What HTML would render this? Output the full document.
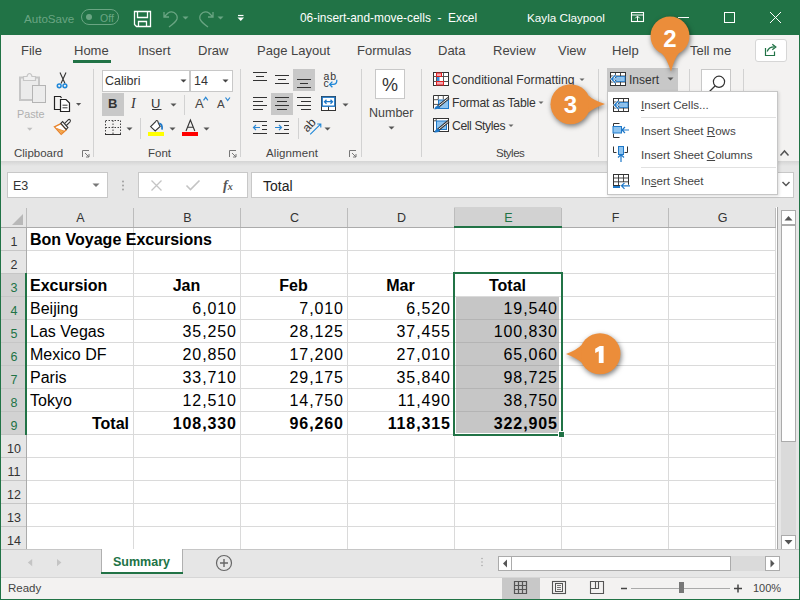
<!DOCTYPE html><html><head><meta charset="utf-8"><style>
*{margin:0;padding:0;box-sizing:border-box}
html,body{width:800px;height:600px;overflow:hidden;background:#e6e6e6;font-family:"Liberation Sans",sans-serif}
.a{position:absolute}
svg{position:absolute;overflow:visible}
.t{position:absolute;white-space:nowrap;line-height:1}
.tab{position:absolute;top:44px;font-size:13px;color:#444;white-space:nowrap;line-height:1}
.gl{position:absolute;top:148px;font-size:11.5px;color:#444;white-space:nowrap;line-height:1}
.rt{position:absolute;font-size:12px;color:#333;white-space:nowrap;line-height:1}
.mi{position:absolute;left:641px;font-size:11.6px;color:#444;white-space:nowrap;line-height:1}
.c{position:absolute;font-size:16px;color:#000;white-space:nowrap;line-height:1}
.n{letter-spacing:0.9px}
.b{font-weight:bold}
.rh{position:absolute;left:1px;width:26px;font-size:12.5px;color:#444;text-align:center;line-height:1}
</style></head><body>
<div class="a" style="left:0;top:0;width:800px;height:35px;background:#217346"></div>
<div class="t" style="left:24px;top:12.5px;font-size:11.6px;color:#6aa583">AutoSave</div>
<div class="a" style="left:81px;top:9px;width:38px;height:16px;border:1px solid #6aa583;border-radius:8px"></div>
<div class="a" style="left:85.5px;top:14px;width:6px;height:6px;border-radius:3px;background:#6aa583"></div>
<div class="t" style="left:100px;top:12.5px;font-size:10.5px;color:#6aa583">Off</div>
<svg style="left:0;top:0" width="800" height="35">
<path d="M134.5 11.5 H150.5 V26.5 H136.5 L134.5 24.5 Z" fill="none" stroke="#fff" stroke-width="1.3"/>
<path d="M137.5 11.5 V17.5 H147.5 V11.5" fill="none" stroke="#fff" stroke-width="1.3"/>
<path d="M138.5 26.5 V21.5 H146.5 V26.5" fill="none" stroke="#fff" stroke-width="1.3"/>
<path d="M164 12 V17 H169 M164 17 L168 13 Q171 11 174 12.5 Q178 15 177 19 Q176 22 169 27" fill="none" stroke="#6aa583" stroke-width="1.3"/>
<path d="M182.5 16.5 H188.5 L185.5 19.5 Z" fill="#6aa583"/>
<path d="M213 12 V17 H208 M213 17 L209 13 Q206 11 203 12.5 Q199 15 200 19 Q201 22 208 27" fill="none" stroke="#6aa583" stroke-width="1.3"/>
<path d="M217.5 16.5 H223.5 L220.5 19.5 Z" fill="#6aa583"/>
<path d="M238 15.5 H243.5" stroke="#fff" stroke-width="1.2"/>
<path d="M237.5 17.5 H244 L240.75 21 Z" fill="#fff"/>
<rect x="631.5" y="12.5" width="12" height="9" fill="none" stroke="#fff" stroke-width="1.1"/>
<path d="M631.5 15 H643.5 M637.5 21.5 V16.3 M635.3 18.3 L637.5 16.1 L639.7 18.3" fill="none" stroke="#fff" stroke-width="1"/>
<path d="M678 17.5 H689" stroke="#fff" stroke-width="1"/>
<rect x="724.5" y="12.5" width="10" height="10" fill="none" stroke="#fff" stroke-width="1"/>
<path d="M770 12 L781 23 M781 12 L770 23" stroke="#fff" stroke-width="1"/>
</svg>
<div class="t" style="left:300px;top:13px;font-size:11.9px;color:#fff">06-insert-and-move-cells&nbsp; -&nbsp; Excel</div>
<div class="t" style="left:527px;top:12px;font-size:11.7px;color:#fff">Kayla Claypool</div>
<div class="a" style="left:0;top:35px;width:800px;height:126px;background:#f3f2f1"></div>
<div class="tab" style="left:21px">File</div>
<div class="tab" style="left:74px">Home</div>
<div class="tab" style="left:138px">Insert</div>
<div class="tab" style="left:198px">Draw</div>
<div class="tab" style="left:257px">Page Layout</div>
<div class="tab" style="left:357px">Formulas</div>
<div class="tab" style="left:438px">Data</div>
<div class="tab" style="left:493px">Review</div>
<div class="tab" style="left:558px">View</div>
<div class="tab" style="left:612px">Help</div>
<div class="tab" style="left:690px">Tell me</div>
<div class="a" style="left:73px;top:60px;width:38px;height:3px;background:#217346"></div>
<div class="a" style="left:755px;top:38.5px;width:31.5px;height:23px;background:#fff;border:1px solid #d6d6d6;border-radius:3px"></div>
<svg style="left:0;top:0" width="800" height="600">
<path d="M765.5 48 V55.5 H774.5 V51.5" fill="none" stroke="#217346" stroke-width="1.2"/>
<path d="M767.2 51.5 Q768.5 46.8 774.5 46.8" fill="none" stroke="#217346" stroke-width="1.3"/>
<path d="M772.3 44.2 L775.8 47 L772.3 49.8" fill="none" stroke="#217346" stroke-width="1.3"/>
</svg>
<div class="a" style="left:93px;top:69px;width:1px;height:88px;background:#d2d2d2"></div>
<div class="a" style="left:240px;top:69px;width:1px;height:88px;background:#d2d2d2"></div>
<div class="a" style="left:361px;top:69px;width:1px;height:88px;background:#d2d2d2"></div>
<div class="a" style="left:421px;top:69px;width:1px;height:88px;background:#d2d2d2"></div>
<div class="a" style="left:598px;top:69px;width:1px;height:88px;background:#d2d2d2"></div>
<div class="a" style="left:689px;top:69px;width:1px;height:88px;background:#d2d2d2"></div>
<div class="a" style="left:743px;top:69px;width:1px;height:88px;background:#d2d2d2"></div>
<div class="gl" style="left:14px;letter-spacing:0px">Clipboard</div>
<div class="gl" style="left:148px;letter-spacing:0px">Font</div>
<div class="gl" style="left:266px;letter-spacing:0.1px">Alignment</div>
<div class="gl" style="left:496px;letter-spacing:-0.5px">Styles</div>
<svg style="left:0;top:0" width="800" height="600">
<path d="M82.5 157 V150.5 H89" fill="none" stroke="#777" stroke-width="1"/><path d="M85 153 L89 157 M89 154 V157 H86" fill="none" stroke="#777" stroke-width="1"/>
<path d="M229.5 157 V150.5 H236" fill="none" stroke="#777" stroke-width="1"/><path d="M232 153 L236 157 M236 154 V157 H233" fill="none" stroke="#777" stroke-width="1"/>
<path d="M349.5 157 V150.5 H356" fill="none" stroke="#777" stroke-width="1"/><path d="M352 153 L356 157 M356 154 V157 H353" fill="none" stroke="#777" stroke-width="1"/>
</svg>
<svg style="left:0;top:0" width="800" height="600">
<rect x="20" y="77.5" width="19" height="22.5" fill="#ebebeb" stroke="#c6c6c6" stroke-width="2"/>
<path d="M23.5 80.5 V76.5 H27 Q27.5 73.5 29.5 73.5 Q31.5 73.5 32 76.5 H35.5 V80.5 Z" fill="#f0f0f0" stroke="#c6c6c6" stroke-width="1.2"/>
<rect x="32.5" y="85.5" width="13" height="17" fill="#ececec" stroke="#b4b4b4" stroke-width="1"/>
<path d="M27 127.8 H32.5 L29.75 130.8 Z" fill="#c0c0c0"/>
<path d="M60 72.5 L65 83.5 M66 72.5 L61 83.5" stroke="#333" stroke-width="1.1"/>
<circle cx="59.2" cy="85.8" r="1.9" fill="none" stroke="#1e87d8" stroke-width="1.5"/>
<circle cx="64.9" cy="85.8" r="1.9" fill="none" stroke="#1e87d8" stroke-width="1.5"/>
<path d="M60 109.5 H54.5 V96.5 H60.5 L61.5 98" fill="none" stroke="#222" stroke-width="1.2"/>
<path d="M60.5 99.5 H66 L69.5 103 V111.5 H60.5 Z" fill="#fff" stroke="#222" stroke-width="1.2"/>
<path d="M62.5 105.2 H67.5 M62.5 107.8 H67.5" stroke="#222" stroke-width="0.9"/>
<path d="M76 103.1 H81.2 L78.6 105.8 Z" fill="#555"/>
<path d="M54.4 126.8 L61 123.6 L66.4 129.8 L61.2 134.4 Z" fill="#fff" stroke="#e8832a" stroke-width="1.3"/>
<path d="M57 128.6 L64.6 131.2 L61.4 133 Z" fill="#f6b04a" stroke="#e8832a" stroke-width="0.8"/>
<path d="M64 124.2 L68.2 119.8 Q69.3 119 70.1 119.9 Q70.8 120.8 70 121.8 L65.8 126" fill="#fff" stroke="#333" stroke-width="1.1"/>
<path d="M60.8 123.4 L62.6 121.6 L67.9 127.6 L66.2 129.4 Z" fill="#fff" stroke="#333" stroke-width="1.1"/>
</svg>
<div class="t" style="left:17px;top:109px;font-size:10.8px;color:#b0b0b0;letter-spacing:0px">Paste</div>
<div class="a" style="left:102px;top:69.5px;width:88px;height:22px;background:#fff;border:1px solid #c8c8c8"></div>
<div class="a" style="left:190px;top:69.5px;width:43px;height:22px;background:#fff;border:1px solid #c8c8c8"></div>
<div class="t" style="left:105px;top:75px;font-size:12.5px;color:#333">Calibri</div>
<div class="t" style="left:194px;top:75px;font-size:12.5px;color:#333">14</div>
<div class="a" style="left:102px;top:93px;width:22px;height:23px;background:#c8c8c8"></div>
<div class="a" style="left:293px;top:69px;width:22px;height:22px;background:#c8c8c8"></div>
<div class="a" style="left:271px;top:93px;width:22px;height:22px;background:#c8c8c8"></div>
<div class="t" style="left:108px;top:97px;font-size:13px;font-weight:bold;color:#333">B</div>
<div class="t" style="left:131px;top:97px;font-size:14px;font-style:italic;font-family:'Liberation Serif',serif;color:#333">I</div>
<div class="t" style="left:151px;top:97px;font-size:13px;color:#333">U</div>
<div class="t" style="left:195px;top:97px;font-size:13px;color:#444">A</div>
<div class="t" style="left:217px;top:99px;font-size:11.5px;color:#444">A</div>
<svg style="left:0;top:0" width="800" height="600">
<path d="M180.5 79.5 H186.5 L183.5 82.5 Z" fill="#444"/>
<path d="M222.5 79.5 H228.5 L225.5 82.5 Z" fill="#444"/>
<path d="M152 109.5 H161.5" stroke="#333" stroke-width="1"/>
<path d="M170.5 103.5 H176.5 L173.5 106.5 Z" fill="#555"/>
<rect x="184" y="95" width="1" height="20" fill="#d2d2d2"/>
<path d="M203.5 100.3 L205.7 97.3 L207.9 100.3" fill="none" stroke="#2b87d3" stroke-width="1.2"/>
<path d="M225.5 97.5 L227.7 100.5 L229.9 97.5" fill="none" stroke="#2b87d3" stroke-width="1.2"/>
<path d="M105.5 120.5 H120.5 V134.5 M105.5 134.5 V120.5 M113 120.5 V134.5 M105.5 127.5 H120.5" fill="none" stroke="#444" stroke-width="1" stroke-dasharray="1.5 1.5"/>
<path d="M105 134.5 H121" stroke="#333" stroke-width="1"/>
<path d="M126.5 127.5 H132.5 L129.5 130.5 Z" fill="#555"/>
<rect x="140" y="118" width="1" height="21" fill="#d2d2d2"/>
<path d="M150.6 126.6 L155.6 121.6 Q156.6 119.6 157.8 121.2 L158.4 123.2 L160.2 126.4 L155.2 131 Z" fill="#fff" stroke="#333" stroke-width="1.1"/>
<path d="M159.2 123.4 Q162.6 123.8 162 129.6" fill="none" stroke="#1e78c8" stroke-width="1.7"/>
<rect x="148" y="132" width="16" height="4" fill="#ffff00"/>
<path d="M169.5 127.5 H175.5 L172.5 130.5 Z" fill="#555"/>
<rect x="182" y="132" width="16" height="4" fill="#ff0000"/><path d="M186 131 L190.4 120 L194.8 131 M187.5 127.2 H193.3" fill="none" stroke="#333" stroke-width="1.1"/>
<path d="M203.5 127.5 H209.5 L206.5 130.5 Z" fill="#555"/>
</svg>
<svg style="left:0;top:0" width="800" height="600">
<path d="M253 72.5 H267" stroke="#333" stroke-width="1"/><path d="M253 80.5 H267" stroke="#333" stroke-width="1"/><path d="M256 76.5 H264" stroke="#333" stroke-width="1"/>
<path d="M275 75.5 H289" stroke="#333" stroke-width="1"/><path d="M275 83.5 H289" stroke="#333" stroke-width="1"/><path d="M278 79.5 H286" stroke="#333" stroke-width="1"/>
<path d="M297 79.5 H311" stroke="#333" stroke-width="1"/><path d="M297 87.5 H311" stroke="#333" stroke-width="1"/><path d="M300 83.5 H308" stroke="#333" stroke-width="1"/>
<path d="M253 97.5 H267" stroke="#333" stroke-width="1"/><path d="M253 105.5 H267" stroke="#333" stroke-width="1"/><path d="M253 101.5 H263" stroke="#333" stroke-width="1"/><path d="M253 109.5 H263" stroke="#333" stroke-width="1"/>
<path d="M275 97.5 H289" stroke="#333" stroke-width="1"/><path d="M275 105.5 H289" stroke="#333" stroke-width="1"/><path d="M277 101.5 H287" stroke="#333" stroke-width="1"/><path d="M277 109.5 H287" stroke="#333" stroke-width="1"/>
<path d="M297 97.5 H311" stroke="#333" stroke-width="1"/><path d="M297 105.5 H311" stroke="#333" stroke-width="1"/><path d="M301 101.5 H311" stroke="#333" stroke-width="1"/><path d="M301 109.5 H311" stroke="#333" stroke-width="1"/>
<path d="M262 125.5 H267" stroke="#333" stroke-width="1"/><path d="M262 129.5 H267" stroke="#333" stroke-width="1"/><path d="M253 121.5 H267" stroke="#333" stroke-width="1"/><path d="M253 133.5 H267" stroke="#333" stroke-width="1"/>
<path d="M284 125.5 H289" stroke="#333" stroke-width="1"/><path d="M284 129.5 H289" stroke="#333" stroke-width="1"/><path d="M275 121.5 H289" stroke="#333" stroke-width="1"/><path d="M275 133.5 H289" stroke="#333" stroke-width="1"/>
<path d="M260 127.5 H253.5 M256 125 L253.5 127.5 L256 130" fill="none" stroke="#2b87d3" stroke-width="1.2"/>
<path d="M275 127.5 H281.5 M279 125 L281.5 127.5 L279 130" fill="none" stroke="#2b87d3" stroke-width="1.2"/>
<rect x="298" y="118" width="1" height="21" fill="#d2d2d2"/>
<rect x="321.5" y="96.5" width="14" height="14" fill="#fff" stroke="#333" stroke-width="1"/><path d="M328.5 106 V110.5" stroke="#333" stroke-width="1"/><rect x="322.2" y="97.2" width="12.6" height="9" fill="#fff" stroke="#1e78c8" stroke-width="1.4"/><path d="M324.5 101.7 H332.5 M326.5 99.7 L324.5 101.7 L326.5 103.7 M330.5 99.7 L332.5 101.7 L330.5 103.7" fill="none" stroke="#1e78c8" stroke-width="1.3"/>
<path d="M342.5 103.5 H348.5 L345.5 106.5 Z" fill="#555"/>
<path d="M310.2 134.4 L320.6 124.2 M317.2 124 H320.8 V127.6" fill="none" stroke="#1e87d8" stroke-width="1.1"/>
<path d="M324.5 127.5 H330.5 L327.5 130.5 Z" fill="#555"/>
<path d="M336.8 79.8 Q337.2 84.4 333 84.4 H329.6 M332.4 81.6 L329.6 84.4 L332.4 87.2" fill="none" stroke="#1e87d8" stroke-width="1.3"/>
</svg>
<div class="t" style="left:323.5px;top:70.7px;font-size:10.5px;color:#333;letter-spacing:0.8px">ab</div>
<div class="t" style="left:323.5px;top:78.2px;font-size:10.5px;color:#333">c</div>
<div class="t" style="left:309px;top:121.5px;font-size:12px;color:#333;transform:rotate(-48deg);transform-origin:0 100%">ab</div>
<div class="a" style="left:375px;top:69px;width:30px;height:30px;background:#fff;border:1px solid #c8c8c8"></div>
<div class="t" style="left:382px;top:76px;font-size:18px;color:#333">%</div>
<div class="t" style="left:369px;top:106.5px;font-size:12.5px;color:#444">Number</div>
<svg style="left:0;top:0" width="800" height="600"><path d="M388.5 126.5 H394.5 L391.5 129.5 Z" fill="#555"/></svg>
<div class="rt" style="left:452px;top:74px;font-size:12.2px">Conditional Formatting</div>
<div class="rt" style="left:452px;top:97px;font-size:12.2px;letter-spacing:-0.25px">Format as Table</div>
<div class="rt" style="left:452px;top:120px;font-size:12.2px;letter-spacing:-0.4px">Cell Styles</div>
<svg style="left:0;top:0" width="800" height="600">
<path d="M579.5 78.5 H584.5 L582 81 Z" fill="#666"/>
<path d="M538.5 101.5 H543.5 L541 104 Z" fill="#666"/>
<path d="M508.5 124.5 H513.5 L511 127 Z" fill="#666"/>
<rect x="433.5" y="72.5" width="15" height="13" fill="#fff" stroke="#333" stroke-width="1"/><path d="M433.5 76.5 H448.5 M433.5 81.5 H448.5 M436.5 72.5 V85.5 M443.5 72.5 V85.5" stroke="#444" stroke-width="0.9"/><rect x="436.5" y="73" width="5" height="3.5" fill="#f4a6b0" stroke="#e02020" stroke-width="1"/><rect x="436.5" y="81.5" width="7" height="3.5" fill="#f4a6b0" stroke="#e02020" stroke-width="1"/><rect x="437" y="77" width="2.5" height="4" fill="#3a8ee0"/>
<path d="M433.5 108.5 V95.5 H448.5 V99.5" fill="#fff" stroke="#333" stroke-width="1"/><path d="M433.5 99.7 H438 M433.5 104.4 H438 M438.3 95.5 V99.5 M443.3 95.5 V99.5" stroke="#444" stroke-width="0.9"/><rect x="438.5" y="100" width="10" height="8.5" fill="#8ec4f0" stroke="#1e78c8" stroke-width="1"/><path d="M438 106.6 L448.6 98" stroke="#333" stroke-width="2.8"/><path d="M438.4 106.2 L448.2 98.4" stroke="#fff" stroke-width="0.9"/><path d="M434.2 109.2 Q435.2 106 438.6 105.6 L440.2 107.2 Q439 109.6 434.2 109.2 Z" fill="#1e78c8"/>
<rect x="433.5" y="118.5" width="15" height="13" fill="#fff" stroke="#333" stroke-width="1"/><path d="M433.5 120.8 H436 M436.2 118.5 V121" stroke="#444" stroke-width="0.9"/><rect x="436.5" y="121" width="10" height="8.5" fill="#8ec4f0" stroke="#1e78c8" stroke-width="1"/><path d="M438 129.8 L448.6 121.2" stroke="#333" stroke-width="2.8"/><path d="M438.4 129.4 L448.2 121.6" stroke="#fff" stroke-width="0.9"/><path d="M434.2 132.4 Q435.2 129.2 438.6 128.8 L440.2 130.4 Q439 132.8 434.2 132.4 Z" fill="#1e78c8"/>
</svg>
<div class="a" style="left:607px;top:68px;width:71px;height:23px;background:#c8c8c8"></div>
<div class="rt" style="left:629px;top:74px;font-size:12px">Insert</div>
<svg style="left:0;top:0" width="800" height="600">
<rect x="610.5" y="72.5" width="15" height="13" fill="#fff" stroke="#333" stroke-width="1"/>
<path d="M610.5 76 H625.5 M610.5 82 H625.5 M615.5 72.5 V85.5 M620.5 72.5 V85.5" stroke="#333" stroke-width="0.9"/>
<rect x="616" y="76.5" width="9" height="5" fill="#8ec4f0" stroke="#1e78c8" stroke-width="0.8"/>
<path d="M621 79 H611.5 M615.5 75 L611.5 79 L615.5 83" fill="none" stroke="#fff" stroke-width="2.2"/>
<path d="M621 79 H611.5 M615.5 75 L611.5 79 L615.5 83" fill="none" stroke="#1e78c8" stroke-width="1.2"/>
<path d="M667.5 77.5 H673.5 L670.5 80.5 Z" fill="#555"/>
</svg>
<div class="a" style="left:701px;top:69px;width:30px;height:30px;background:#fff;border:1px solid #c8c8c8"></div>
<svg style="left:0;top:0" width="800" height="600"><circle cx="719" cy="81.8" r="5.6" fill="none" stroke="#333" stroke-width="1.2"/><path d="M715 86 L709.5 91.5" stroke="#333" stroke-width="1.3"/></svg>
<svg style="left:0;top:0" width="800" height="600"><path d="M780.5 155.5 L784.5 151 L788.5 155.5" fill="none" stroke="#555" stroke-width="1.5"/></svg>
<div class="a" style="left:0;top:161px;width:800px;height:5px;background:linear-gradient(#d4d4d4,#e6e6e6)"></div>
<div class="a" style="left:7px;top:172px;width:101px;height:26px;background:#fff;border:1px solid #c8c8c8"></div>
<div class="a" style="left:138px;top:172px;width:110px;height:26px;background:#fff;border:1px solid #c8c8c8"></div>
<div class="a" style="left:251px;top:172px;width:543px;height:26px;background:#fff;border:1px solid #c8c8c8"></div>
<div class="t" style="left:13px;top:180px;font-size:12.5px;color:#333">E3</div>
<svg style="left:0;top:0" width="800" height="600"><path d="M92.5 183.5 H99.5 L96 187 Z" fill="#777"/>
<circle cx="123" cy="181.5" r="0.9" fill="#999"/><circle cx="123" cy="185.5" r="0.9" fill="#999"/><circle cx="123" cy="189.5" r="0.9" fill="#999"/>
<path d="M151.5 180.5 L161.5 190.5 M161.5 180.5 L151.5 190.5" stroke="#c4c4c4" stroke-width="1.3"/>
<path d="M186.5 185.5 L190.5 189.5 L199.5 180.5" fill="none" stroke="#c4c4c4" stroke-width="1.6"/>
<path d="M782.5 182 L786 185.5 L789.5 182" fill="none" stroke="#555" stroke-width="1.5"/></svg>
<div class="t" style="left:223px;top:179px;font-size:14px;font-style:italic;font-weight:bold;font-family:'Liberation Serif',serif;color:#555">f<span style="font-size:10px">x</span></div>
<div class="t" style="left:263px;top:179px;font-size:14px;color:#222">Total</div>
<div class="a" style="left:0;top:227px;width:777px;height:323px;background:#fff"></div>
<div class="a" style="left:0;top:227px;width:26px;height:323px;background:#e6e6e6"></div>
<div class="a" style="left:454px;top:207px;width:107px;height:20px;background:#d2d2d2"></div>
<div class="a" style="left:0;top:274px;width:26px;height:161px;background:#d2d2d2"></div>
<div class="a" style="left:133px;top:208px;width:1px;height:19px;background:#bcbcbc"></div>
<div class="a" style="left:240px;top:208px;width:1px;height:19px;background:#bcbcbc"></div>
<div class="a" style="left:347px;top:208px;width:1px;height:19px;background:#bcbcbc"></div>
<div class="a" style="left:454px;top:208px;width:1px;height:19px;background:#bcbcbc"></div>
<div class="a" style="left:561px;top:208px;width:1px;height:19px;background:#bcbcbc"></div>
<div class="a" style="left:668px;top:208px;width:1px;height:19px;background:#bcbcbc"></div>
<div class="a" style="left:775px;top:208px;width:1px;height:19px;background:#bcbcbc"></div>
<div class="a" style="left:26px;top:208px;width:1px;height:19px;background:#bcbcbc"></div>
<div class="a" style="left:0;top:227px;width:776px;height:1px;background:#ababab"></div>
<div class="a" style="left:26px;top:227px;width:1px;height:323px;background:#ababab"></div>
<div class="a" style="left:27px;top:250px;width:749px;height:1px;background:#dadada"></div>
<div class="a" style="left:0;top:250px;width:26px;height:1px;background:#c6c6c6"></div>
<div class="a" style="left:27px;top:273px;width:749px;height:1px;background:#dadada"></div>
<div class="a" style="left:0;top:273px;width:26px;height:1px;background:#c6c6c6"></div>
<div class="a" style="left:27px;top:296px;width:749px;height:1px;background:#dadada"></div>
<div class="a" style="left:0;top:296px;width:26px;height:1px;background:#c6c6c6"></div>
<div class="a" style="left:27px;top:319px;width:749px;height:1px;background:#dadada"></div>
<div class="a" style="left:0;top:319px;width:26px;height:1px;background:#c6c6c6"></div>
<div class="a" style="left:27px;top:342px;width:749px;height:1px;background:#dadada"></div>
<div class="a" style="left:0;top:342px;width:26px;height:1px;background:#c6c6c6"></div>
<div class="a" style="left:27px;top:365px;width:749px;height:1px;background:#dadada"></div>
<div class="a" style="left:0;top:365px;width:26px;height:1px;background:#c6c6c6"></div>
<div class="a" style="left:27px;top:388px;width:749px;height:1px;background:#dadada"></div>
<div class="a" style="left:0;top:388px;width:26px;height:1px;background:#c6c6c6"></div>
<div class="a" style="left:27px;top:411px;width:749px;height:1px;background:#dadada"></div>
<div class="a" style="left:0;top:411px;width:26px;height:1px;background:#c6c6c6"></div>
<div class="a" style="left:27px;top:434px;width:749px;height:1px;background:#dadada"></div>
<div class="a" style="left:0;top:434px;width:26px;height:1px;background:#c6c6c6"></div>
<div class="a" style="left:27px;top:457px;width:749px;height:1px;background:#dadada"></div>
<div class="a" style="left:0;top:457px;width:26px;height:1px;background:#c6c6c6"></div>
<div class="a" style="left:27px;top:480px;width:749px;height:1px;background:#dadada"></div>
<div class="a" style="left:0;top:480px;width:26px;height:1px;background:#c6c6c6"></div>
<div class="a" style="left:27px;top:503px;width:749px;height:1px;background:#dadada"></div>
<div class="a" style="left:0;top:503px;width:26px;height:1px;background:#c6c6c6"></div>
<div class="a" style="left:27px;top:526px;width:749px;height:1px;background:#dadada"></div>
<div class="a" style="left:0;top:526px;width:26px;height:1px;background:#c6c6c6"></div>
<div class="a" style="left:27px;top:549px;width:749px;height:1px;background:#dadada"></div>
<div class="a" style="left:0;top:549px;width:26px;height:1px;background:#c6c6c6"></div>
<div class="a" style="left:133px;top:228px;width:1px;height:322px;background:#dadada"></div>
<div class="a" style="left:240px;top:228px;width:1px;height:322px;background:#dadada"></div>
<div class="a" style="left:347px;top:228px;width:1px;height:322px;background:#dadada"></div>
<div class="a" style="left:454px;top:228px;width:1px;height:322px;background:#dadada"></div>
<div class="a" style="left:561px;top:228px;width:1px;height:322px;background:#dadada"></div>
<div class="a" style="left:668px;top:228px;width:1px;height:322px;background:#dadada"></div>
<div class="a" style="left:775px;top:228px;width:1px;height:322px;background:#dadada"></div>
<svg style="left:0;top:0" width="800" height="600"><path d="M12 225 L23 214 V225 Z" fill="#b8b8b8"/></svg>
<div class="t" style="left:60.5px;width:40px;text-align:center;top:212px;font-size:12.5px;color:#333">A</div>
<div class="t" style="left:167.5px;width:40px;text-align:center;top:212px;font-size:12.5px;color:#333">B</div>
<div class="t" style="left:274.5px;width:40px;text-align:center;top:212px;font-size:12.5px;color:#333">C</div>
<div class="t" style="left:381.5px;width:40px;text-align:center;top:212px;font-size:12.5px;color:#333">D</div>
<div class="t" style="left:488.5px;width:40px;text-align:center;top:212px;font-size:12.5px;color:#217346">E</div>
<div class="t" style="left:595.5px;width:40px;text-align:center;top:212px;font-size:12.5px;color:#333">F</div>
<div class="t" style="left:702.5px;width:40px;text-align:center;top:212px;font-size:12.5px;color:#333">G</div>
<div class="rh" style="top:236px;color:#333">1</div>
<div class="rh" style="top:259px;color:#333">2</div>
<div class="rh" style="top:282px;color:#217346">3</div>
<div class="rh" style="top:305px;color:#217346">4</div>
<div class="rh" style="top:328px;color:#217346">5</div>
<div class="rh" style="top:351px;color:#217346">6</div>
<div class="rh" style="top:374px;color:#217346">7</div>
<div class="rh" style="top:397px;color:#217346">8</div>
<div class="rh" style="top:420px;color:#217346">9</div>
<div class="rh" style="top:443px;color:#333">10</div>
<div class="rh" style="top:466px;color:#333">11</div>
<div class="rh" style="top:489px;color:#333">12</div>
<div class="rh" style="top:512px;color:#333">13</div>
<div class="rh" style="top:535px;color:#333">14</div>
<div class="a" style="left:25px;top:273px;width:2px;height:162px;background:#217346"></div>
<div class="a" style="left:454px;top:226px;width:108px;height:2px;background:#217346"></div>
<div class="a" style="left:456px;top:297px;width:103px;height:136px;background:#c6c6c6"></div>
<div class="a" style="left:456px;top:319px;width:103px;height:1px;background:#b4b4b4"></div>
<div class="a" style="left:456px;top:342px;width:103px;height:1px;background:#b4b4b4"></div>
<div class="a" style="left:456px;top:365px;width:103px;height:1px;background:#b4b4b4"></div>
<div class="a" style="left:456px;top:388px;width:103px;height:1px;background:#b4b4b4"></div>
<div class="a" style="left:456px;top:411px;width:103px;height:1px;background:#b4b4b4"></div>
<div class="a" style="left:453px;top:272px;width:110px;height:164px;border:2px solid #217346"></div>
<div class="a" style="left:558px;top:431px;width:7px;height:7px;background:#217346;border:1px solid #fff"></div>
<div class="c b" style="left:30px;top:232px">Bon Voyage Excursions</div>
<div class="c b" style="left:30px;top:278px">Excursion</div>
<div class="c b" style="left:133px;width:107px;text-align:center;top:278px">Jan</div>
<div class="c b" style="left:240px;width:107px;text-align:center;top:278px">Feb</div>
<div class="c b" style="left:347px;width:107px;text-align:center;top:278px">Mar</div>
<div class="c b" style="left:454px;width:107px;text-align:center;top:278px">Total</div>
<div class="c" style="left:30px;top:301px">Beijing</div>
<div class="c n" style="left:133px;width:103.9px;text-align:right;top:301px">6,010</div>
<div class="c n" style="left:240px;width:103.9px;text-align:right;top:301px">7,010</div>
<div class="c n" style="left:347px;width:103.9px;text-align:right;top:301px">6,520</div>
<div class="c n" style="left:454px;width:103.9px;text-align:right;top:301px">19,540</div>
<div class="c" style="left:30px;top:324px">Las Vegas</div>
<div class="c n" style="left:133px;width:103.9px;text-align:right;top:324px">35,250</div>
<div class="c n" style="left:240px;width:103.9px;text-align:right;top:324px">28,125</div>
<div class="c n" style="left:347px;width:103.9px;text-align:right;top:324px">37,455</div>
<div class="c n" style="left:454px;width:103.9px;text-align:right;top:324px">100,830</div>
<div class="c" style="left:30px;top:347px">Mexico DF</div>
<div class="c n" style="left:133px;width:103.9px;text-align:right;top:347px">20,850</div>
<div class="c n" style="left:240px;width:103.9px;text-align:right;top:347px">17,200</div>
<div class="c n" style="left:347px;width:103.9px;text-align:right;top:347px">27,010</div>
<div class="c n" style="left:454px;width:103.9px;text-align:right;top:347px">65,060</div>
<div class="c" style="left:30px;top:370px">Paris</div>
<div class="c n" style="left:133px;width:103.9px;text-align:right;top:370px">33,710</div>
<div class="c n" style="left:240px;width:103.9px;text-align:right;top:370px">29,175</div>
<div class="c n" style="left:347px;width:103.9px;text-align:right;top:370px">35,840</div>
<div class="c n" style="left:454px;width:103.9px;text-align:right;top:370px">98,725</div>
<div class="c" style="left:30px;top:393px">Tokyo</div>
<div class="c n" style="left:133px;width:103.9px;text-align:right;top:393px">12,510</div>
<div class="c n" style="left:240px;width:103.9px;text-align:right;top:393px">14,750</div>
<div class="c n" style="left:347px;width:103.9px;text-align:right;top:393px">11,490</div>
<div class="c n" style="left:454px;width:103.9px;text-align:right;top:393px">38,750</div>
<div class="c b" style="left:26px;width:103px;text-align:right;top:416px">Total</div>
<div class="c b n" style="left:133px;width:103.9px;text-align:right;top:416px">108,330</div>
<div class="c b n" style="left:240px;width:103.9px;text-align:right;top:416px">96,260</div>
<div class="c b n" style="left:347px;width:103.9px;text-align:right;top:416px">118,315</div>
<div class="c b n" style="left:454px;width:103.9px;text-align:right;top:416px">322,905</div>
<div class="a" style="left:776px;top:207px;width:1px;height:343px;background:#fff"></div>
<div class="a" style="left:777px;top:207px;width:1px;height:343px;background:#a8a8a8"></div>
<div class="a" style="left:781px;top:225px;width:15px;height:311px;background:#dadada"></div>
<div class="a" style="left:781px;top:210px;width:15px;height:15px;background:#fff;border:1px solid #ababab"></div>
<div class="a" style="left:781px;top:225px;width:15px;height:217px;background:#fff;border:1px solid #ababab"></div>
<div class="a" style="left:781px;top:535px;width:15px;height:15px;background:#fff;border:1px solid #ababab"></div>
<svg style="left:0;top:0" width="800" height="600"><path d="M784.5 220.5 H792.5 L788.5 216 Z" fill="#555"/><path d="M784.5 540 H792.5 L788.5 544.5 Z" fill="#555"/></svg>
<div class="a" style="left:0;top:549px;width:800px;height:28px;background:#e6e6e6;border-top:1px solid #c6c6c6"></div>
<div class="a" style="left:101px;top:549px;width:82px;height:25px;background:#fff;border-left:1px solid #b0b0b0;border-right:1px solid #b0b0b0"></div>
<div class="a" style="left:101px;top:572px;width:82px;height:2px;background:#217346"></div>
<div class="t" style="left:113px;top:556px;font-size:12.5px;font-weight:bold;color:#217346">Summary</div>
<svg style="left:0;top:0" width="800" height="600">
<path d="M32.2 559 L27.8 562.6 L32.2 566.2 Z" fill="#c4c4c4"/>
<path d="M57 559 L61.4 562.6 L57 566.2 Z" fill="#c4c4c4"/>
<circle cx="224" cy="563" r="7.5" fill="none" stroke="#666" stroke-width="1.2"/>
<path d="M220 563 H228 M224 559 V567" stroke="#666" stroke-width="1.4"/>
<circle cx="482" cy="558.5" r="0.8" fill="#aaa"/><circle cx="482" cy="562" r="0.8" fill="#aaa"/><circle cx="482" cy="565.5" r="0.8" fill="#aaa"/>
</svg>
<div class="a" style="left:498px;top:556px;width:282px;height:15px;background:#dadada"></div>
<div class="a" style="left:498px;top:556px;width:14px;height:15px;background:#fff;border:1px solid #ababab"></div>
<div class="a" style="left:511px;top:556px;width:220px;height:15px;background:#fff;border:1px solid #ababab"></div>
<div class="a" style="left:765px;top:556px;width:15px;height:15px;background:#fff;border:1px solid #ababab"></div>
<svg style="left:0;top:0" width="800" height="600"><path d="M507 559.5 V567.5 L503 563.5 Z" fill="#555"/><path d="M770.5 559.5 V567.5 L774.5 563.5 Z" fill="#555"/></svg>
<div class="a" style="left:0;top:577px;width:800px;height:23px;background:#f3f2f1;border-top:1px solid #d6d6d6"></div>
<div class="t" style="left:8px;top:583px;font-size:11.5px;color:#444">Ready</div>
<div class="a" style="left:502px;top:578px;width:38px;height:21px;background:#c8c8c8"></div>
<svg style="left:0;top:0" width="800" height="600">
<path d="M514.5 581.5 H526.5 V593.5 H514.5 Z M514.5 585.5 H526.5 M514.5 589.5 H526.5 M518.5 581.5 V593.5 M522.5 581.5 V593.5" fill="none" stroke="#555" stroke-width="1.2"/>
<rect x="552.5" y="581.5" width="13" height="12" fill="none" stroke="#555" stroke-width="1.1"/>
<rect x="555.5" y="583.5" width="7" height="8" fill="none" stroke="#555" stroke-width="1"/>
<path d="M557 585.5 H561 M557 587.5 H561 M557 589.5 H561" stroke="#555" stroke-width="0.8"/>
<path d="M590.5 581.5 H603.5 V593.5 H590.5 Z M595.5 581.5 V588.5 M598.5 581.5 V588.5 H590.5" fill="none" stroke="#555" stroke-width="1.1"/>
<path d="M621 588.5 H627" stroke="#444" stroke-width="1.5"/>
<path d="M631 588.5 H730" stroke="#aaa" stroke-width="1"/>
<rect x="679" y="582" width="5" height="11" fill="#777"/>
<path d="M734 588.5 H742 M738 584.5 V592.5" stroke="#444" stroke-width="1.5"/>
</svg>
<div class="t" style="left:753px;top:583px;font-size:11px;color:#444">100%</div>
<div class="a" style="left:0;top:35px;width:1px;height:565px;background:#217346"></div>
<div class="a" style="left:799px;top:35px;width:1px;height:565px;background:#217346"></div>
<div class="a" style="left:0;top:599px;width:800px;height:1px;background:#217346"></div>
<div class="a" style="left:607px;top:91px;width:171px;height:104px;background:#fff;border:1px solid #c6c6c6;box-shadow:1px 1px 3px rgba(0,0,0,0.15)"></div>
<div class="mi" style="top:99px"><u>I</u>nsert Cells...</div>
<div class="mi" style="top:125px">Insert Sheet <u>R</u>ows</div>
<div class="mi" style="top:149px">Insert Sheet <u>C</u>olumns</div>
<div class="mi" style="top:175px">In<u>s</u>ert Sheet</div>
<div class="a" style="left:641px;top:117px;width:135px;height:1px;background:#e1e1e1"></div>
<div class="a" style="left:641px;top:167px;width:135px;height:1px;background:#e1e1e1"></div>
<svg style="left:0;top:0" width="800" height="600">
<rect x="613.5" y="98.5" width="15" height="13" fill="#fff" stroke="#333" stroke-width="1"/>
<path d="M613.5 102 H628.5 M613.5 108 H628.5 M618.5 98.5 V111.5 M623.5 98.5 V111.5" stroke="#333" stroke-width="0.9"/>
<rect x="619" y="102.5" width="9" height="5" fill="#8ec4f0" stroke="#1e78c8" stroke-width="0.8"/>
<path d="M624 105 H614.5 M618.5 101 L614.5 105 L618.5 109" fill="none" stroke="#fff" stroke-width="2.2"/>
<path d="M624 105 H614.5 M618.5 101 L614.5 105 L618.5 109" fill="none" stroke="#1e78c8" stroke-width="1.2"/>
<path d="M619.5 123.5 H613.5 V126.5 M613.5 133.5 V137.5 H619.5" fill="none" stroke="#333" stroke-width="1"/>
<rect x="613" y="126.5" width="8.5" height="6.5" fill="#8ec4f0" stroke="#1e78c8" stroke-width="1"/>
<path d="M629 130 H622 M625 127 L622 130 L625 133" fill="none" stroke="#1e78c8" stroke-width="1.2"/>
<path d="M613.5 146.5 V152.5 H616.5 M627.5 146.5 V152.5 H624.5" fill="none" stroke="#333" stroke-width="1"/>
<rect x="618.5" y="146.5" width="5" height="8" fill="#8ec4f0" stroke="#1e78c8" stroke-width="1"/>
<path d="M621 162 V154.5 M618 157.5 L621 154.5 L624 157.5" fill="none" stroke="#1e78c8" stroke-width="1.2"/>
<rect x="613.5" y="174.5" width="15" height="11" fill="#fff" stroke="#333" stroke-width="1"/>
<path d="M613.5 178 H628.5 M613.5 181.8 H628.5 M618.5 174.5 V185.5 M623.5 174.5 V185.5" stroke="#333" stroke-width="0.9"/>
<path d="M630 185.8 H621.5 M624.5 182.8 L621.5 185.8 L624.5 188.8" fill="none" stroke="#fff" stroke-width="2.2"/>
<path d="M630 185.8 H621.5 M624.5 182.8 L621.5 185.8 L624.5 188.8" fill="none" stroke="#1e78c8" stroke-width="1.2"/>
<rect x="613" y="186" width="7" height="2" fill="#1e78c8"/>
</svg>
<svg style="left:0;top:0" width="800" height="600">
<g style="filter:drop-shadow(1.5px 2px 2.5px rgba(0,0,0,0.5))"><circle cx="600" cy="353.7" r="20.5" fill="#eb8d3a"/>
<path d="M581.5 344.9 Q577.5 349.4 566 354 Q577.6 358.4 581.6 362.8 Z" fill="#eb8d3a"/></g>
</svg>
<svg style="left:0;top:0" width="800" height="600"><path d="M598.8 363 V351.2 L595.2 353 V348.8 L599.8 346 H603.6 V363 Z" fill="#fff"/></svg>
<svg style="left:0;top:0" width="800" height="600">
<g style="filter:drop-shadow(1.5px 2px 2.5px rgba(0,0,0,0.5))"><circle cx="670" cy="36" r="19.5" fill="#eb8d3a"/>
<path d="M662.0 53.8 Q666.4 57.6 671 71.5 Q674.8 57.4 679.0 53.3 Z" fill="#eb8d3a"/></g>
</svg>
<div class="t" style="left:655px;width:30px;text-align:center;top:27px;font-size:24px;font-weight:bold;color:#fff">2</div>
<svg style="left:0;top:0" width="800" height="600">
<g style="filter:drop-shadow(1.5px 2px 2.5px rgba(0,0,0,0.5))"><circle cx="570.5" cy="104.2" r="20" fill="#eb8d3a"/>
<path d="M588.6 112.8 Q592.5 108.4 605 104 Q592.5 99.7 588.5 95.4 Z" fill="#eb8d3a"/></g>
</svg>
<div class="t" style="left:555.5px;width:30px;text-align:center;top:93.2px;font-size:24px;font-weight:bold;color:#fff">3</div>
</body></html>
